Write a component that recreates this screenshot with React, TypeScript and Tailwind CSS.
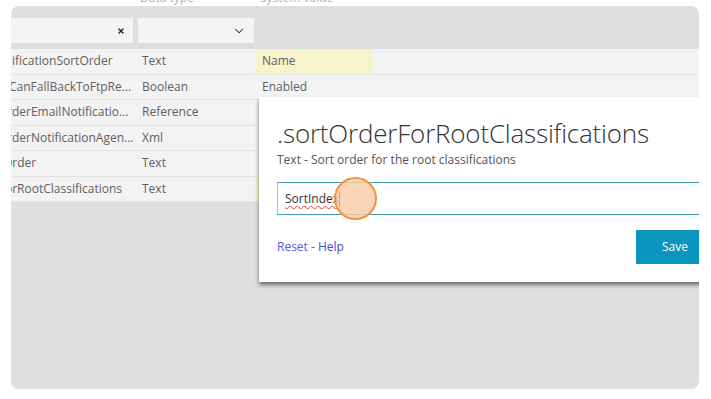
import { X, ChevronDown } from 'lucide-react';

const rows = [
  { name: 'ificationSortOrder', shift: 'ml-[1px]', type: 'Text', value: 'Name', hl: true },
  { name: 'CanFallBackToFtpRe...', shift: 'ml-[-2px]', type: 'Boolean', value: 'Enabled', hl: false },
  { name: 'rderEmailNotificatio...', shift: 'ml-[-4px]', type: 'Reference', value: '', hl: false },
  { name: 'rderNotificationAgen...', shift: 'ml-[-4px]', type: 'Xml', value: '', hl: false },
  { name: 'Order', shift: 'ml-[-8px]', type: 'Text', value: '', hl: false },
  { name: 'orRootClassifications', shift: 'ml-[-6px]', type: 'Text', value: '', hl: true },
];

export default function App() {
  return (
    <div className="w-[711px] h-[399px] bg-white font-['Open_Sans',sans-serif] text-[12px] text-[#606060] overflow-hidden">
      {/* column headers, mostly scrolled out of view */}
      <div className="h-[6px] overflow-hidden flex text-[#b4b4b4]">
        <div className="w-[140px] shrink-0" />
        <div className="w-[120px] shrink-0 mt-[-10px] leading-[16px]">Data type</div>
        <div className="mt-[-10px] leading-[16px]">System value</div>
      </div>

      <div className="ml-[11px] w-[688px] h-[383px] rounded-lg bg-[#dedfe1] overflow-hidden relative pt-[12px]">
        <div className="flex gap-[5px] h-[25px]">
          <div className="w-[122px] bg-[#f4f4f4] flex items-center justify-end pr-[8px]">
            <X size={8} strokeWidth={4} className="text-[#222]" />
          </div>
          <div className="w-[116px] bg-[#f4f4f4] flex items-center justify-end pr-[8px]">
            <ChevronDown size={14} strokeWidth={1.8} className="text-[#333]" />
          </div>
        </div>

        <div className="mt-[6px]">
          {rows.map((r, i) => (
            <div key={i} className="flex h-[25.5px] bg-[#f3f3f3] border-b border-[#e2e2e2]">
              <div className="w-[126px] shrink-0 overflow-hidden whitespace-nowrap flex items-center">
                <span className={r.shift}>{r.name}</span>
              </div>
              <div className="w-[118px] shrink-0 flex items-center pl-[5px]">{r.type}</div>
              <div className={`w-[118px] shrink-0 flex items-center pl-[7px] ${r.hl ? 'bg-[#f6f4cd]' : ''}`}>
                {r.value}
              </div>
              <div className="flex-1" />
            </div>
          ))}
        </div>

        {/* edit dialog */}
        <div className="absolute left-[248px] top-[91px] w-[473px] bg-white px-[18px] pt-[20px] pb-[18px] shadow-[0_3px_4px_rgba(0,0,0,0.5)]">
          <h2 className="text-[26px] leading-[32px] font-light text-[#333] tracking-[-0.2px]">
            .sortOrderForRootClassifications
          </h2>
          <p className="mt-[3px] text-[12px] leading-[16px] text-[#555]">
            Text - Sort order for the root classifications
          </p>
          <div className="relative mt-[14px] h-[33px] border border-[#3f9db5] border-l-[#8ccbdc] flex items-center pl-[7px] text-[12px] text-[#333]">
            <span className="underline decoration-wavy decoration-[#e23a3a] decoration-1 underline-offset-2">
              SortIndex
            </span>
            <span className="w-px h-[15px] bg-[#222]" />
            <div className="absolute left-[56px] top-[-6px] w-[43px] h-[43px] rounded-full border-2 border-[#f6923a] bg-[#f9c9a4]/80" />
          </div>
          <div className="mt-[15px] flex items-center justify-between">
            <div className="text-[12px]">
              <span className="text-[#5b5bd9]">Reset</span>
              <span className="text-[#666]"> - </span>
              <span className="text-[#4a4ad2]">Help</span>
            </div>
            <button className="w-[78px] h-[34px] bg-[#0a95be] text-white text-[12px]">Save</button>
          </div>
        </div>
      </div>
    </div>
  );
}
